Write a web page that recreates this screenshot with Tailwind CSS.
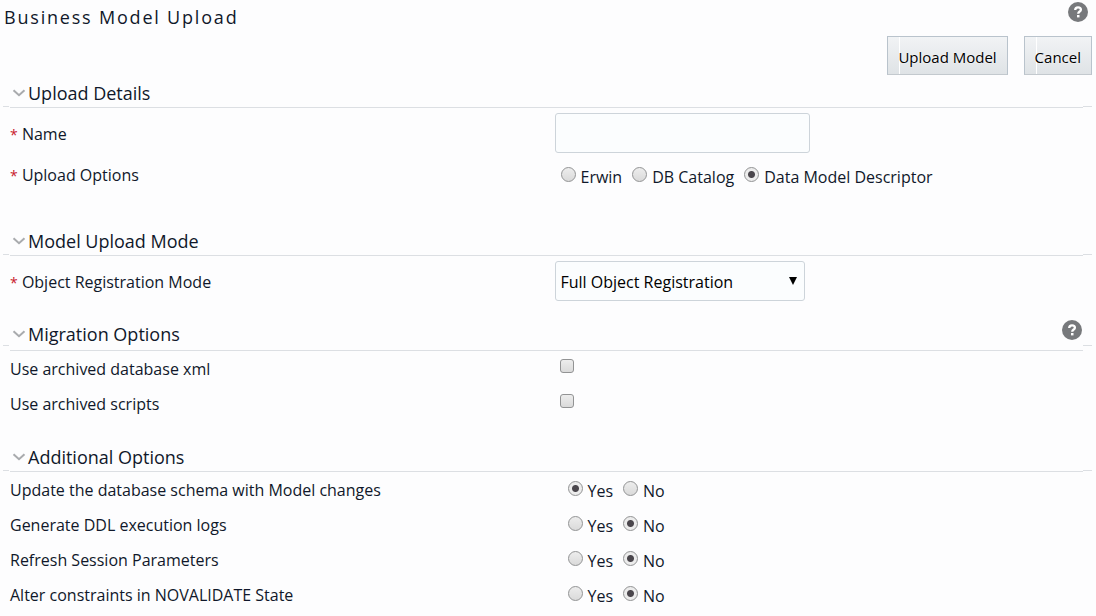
<!DOCTYPE html>
<html lang="en">
<head>
<meta charset="utf-8">
<title>Business Model Upload</title>
<meta name="viewport" content="width=device-width, initial-scale=1.0">
<script src="https://cdn.jsdelivr.net/npm/@tailwindcss/browser@4"></script>
</head>

<body class="min-h-screen bg-[#fdfdfe] font-['Open_Sans','Noto_Sans',sans-serif] text-[16px] leading-6 text-[#10182a]">
    <!-- Title and actions -->
    <header class="flex justify-between items-start pl-1 pr-1 h-[81px]">
        <h1 class="pt-[5px] text-[18px] leading-6 tracking-widest">Business Model Upload</h1>
        <div class="flex flex-col items-end">
            <button type="button" aria-label="Help" class="mt-[2px] mr-1">
                <svg width="20" height="20" viewBox="0 0 20 20" class="block">
                    <circle cx="10" cy="10" r="10" fill="#77797c"/>
                    <path d="M7.2 8C7.2 6.2 8.4 5.3 10 5.3S12.9 6.2 12.9 7.7C12.9 9.6 10.2 9.5 10.2 11.8" fill="none" stroke="#fff" stroke-width="2.3"/>
                    <rect x="9" y="13" width="2.5" height="2.4" fill="#fff"/>
                </svg>
            </button>
            <div class="flex gap-4 mt-[14px]">
                <button type="button" class="relative h-[39px] px-[10px] pt-[3px] border border-[#b9c3cc] border-b-[#c3c9ce] bg-linear-to-b from-[#f1f3f5] to-[#dfe3e6] text-black text-[15px] [text-shadow:0_0_2px_#fff]">
                    <span class="absolute left-[11px] inset-y-0 w-px bg-white"></span>
                    <span class="relative">Upload Model</span>
                </button>
                <button type="button" class="relative h-[39px] px-[10px] pt-[3px] border border-[#b9c3cc] border-b-[#c3c9ce] bg-linear-to-b from-[#f1f3f5] to-[#dfe3e6] text-black text-[15px] [text-shadow:0_0_2px_#fff]">
                    <span class="absolute left-[11px] inset-y-0 w-px bg-white"></span>
                    <span class="relative">Cancel</span>
                </button>
            </div>
        </div>
    </header>

    <main class="pl-[10px] pr-[13px]">
        <!-- Upload Details -->
        <section>
            <div class="relative flex items-center h-[27px] pb-[2px] border-b border-[#dcdfe3]">
                <span class="absolute -left-[7px] -bottom-px w-[6px] h-[2px] border-t border-[#dcdfe3]"></span>
                <span class="absolute -right-[9px] -bottom-px w-[9px] h-[2px] border-t border-[#dcdfe3]"></span>
                <svg width="14" height="8" viewBox="0 0 14 8" class="ml-[2px] mr-[2px]"><path d="M1.5 1.2L7 6.2L12.5 1.2" fill="none" stroke="#a9abae" stroke-width="2"/></svg>
                <h2 class="text-[18px] leading-6">Upload Details</h2>
            </div>
            <div class="grid grid-cols-2 items-center mt-[5px]">
                <label for="modelName" class="pt-[2px]"><span class="text-[14px] text-[#c8202c]">*</span> Name</label>
                <div class="pl-2">
                    <input type="text" id="modelName" class="block w-[255px] h-10 px-[5px] border border-[#cdd4da] rounded-[3px] bg-[#fbfdfe]">
                </div>
            </div>
            <fieldset class="grid grid-cols-2 items-center h-[35px] mt-[5px]" aria-labelledby="uploadOptions">
                <span id="uploadOptions"><span class="text-[14px] text-[#c8202c]">*</span> Upload Options</span>
                <div class="flex gap-[10px] pt-[2px] pl-[14px]">
                    <label class="flex gap-[5px]">
                        <input type="radio" name="source" class="appearance-none size-[15px] mt-[2px] rounded-full border border-[#929394] bg-linear-to-b from-[#ededed] to-[#dadada]">
                        Erwin
                    </label>
                    <label class="flex gap-[5px]">
                        <input type="radio" name="source" class="appearance-none size-[15px] mt-[2px] rounded-full border border-[#929394] bg-linear-to-b from-[#ededed] to-[#dadada]">
                        DB Catalog
                    </label>
                    <label class="flex gap-[5px]">
                        <input type="radio" name="source" checked class="appearance-none size-[15px] mt-[2px] rounded-full border border-[#929394] bg-[radial-gradient(circle,#4a464c_3px,#ececec_4px)]">
                        Data Model Descriptor
                    </label>
                </div>
            </fieldset>
        </section>

        <!-- Model Upload Mode -->
        <section class="mt-9">
            <div class="relative flex items-center h-[27px] pb-[2px] border-b border-[#dcdfe3]">
                <span class="absolute -left-[7px] -bottom-px w-[6px] h-[2px] border-t border-[#dcdfe3]"></span>
                <span class="absolute -right-[9px] -bottom-px w-[9px] h-[2px] border-t border-[#dcdfe3]"></span>
                <svg width="14" height="8" viewBox="0 0 14 8" class="ml-[2px] mr-[2px]"><path d="M1.5 1.2L7 6.2L12.5 1.2" fill="none" stroke="#a9abae" stroke-width="2"/></svg>
                <h2 class="text-[18px] leading-6">Model Upload Mode</h2>
            </div>
            <div class="grid grid-cols-2 items-center mt-[5px]">
                <label for="registrationMode" class="pt-[2px]"><span class="text-[14px] text-[#c8202c]">*</span> Object Registration Mode</label>
                <div class="pl-2">
                    <div class="relative w-[250px]">
                        <select id="registrationMode" class="block appearance-none w-full h-10 px-[5px] pt-[2px] border border-[#cdd4da] rounded-[3px] bg-[#fbfdfe] text-black">
                            <option>Full Object Registration</option>
                        </select>
                        <svg width="8" height="8" viewBox="0 0 8 8" class="absolute right-2 top-4 pointer-events-none"><path d="M0 0H8L4 8Z" fill="#000"/></svg>
                    </div>
                </div>
            </div>
        </section>

        <!-- Migration Options -->
        <section class="mt-[21px]">
            <div class="relative flex items-center h-[29px] pb-1 border-b border-[#dcdfe3]">
                <span class="absolute -left-[7px] bottom-[3px] w-[6px] h-[2px] border-t border-[#dcdfe3]"></span>
                <span class="absolute -right-[9px] bottom-[3px] w-[9px] h-[2px] border-t border-[#dcdfe3]"></span>
                <svg width="14" height="8" viewBox="0 0 14 8" class="ml-[2px] mr-[2px]"><path d="M1.5 1.2L7 6.2L12.5 1.2" fill="none" stroke="#a9abae" stroke-width="2"/></svg>
                <h2 class="text-[18px] leading-6">Migration Options</h2>
                <button type="button" aria-label="Help" class="ml-auto mr-px mb-2">
                    <svg width="20" height="20" viewBox="0 0 20 20" class="block">
                        <circle cx="10" cy="10" r="10" fill="#77797c"/>
                        <path d="M7.2 8C7.2 6.2 8.4 5.3 10 5.3S12.9 6.2 12.9 7.7C12.9 9.6 10.2 9.5 10.2 11.8" fill="none" stroke="#fff" stroke-width="2.3"/>
                        <rect x="9" y="13" width="2.5" height="2.4" fill="#fff"/>
                    </svg>
                </button>
            </div>
            <div class="grid grid-cols-2 items-center h-[35px]">
                <label for="archivedXml">Use archived database xml</label>
                <div class="pl-[13px] pb-[6px]">
                    <input type="checkbox" id="archivedXml" class="block appearance-none size-[14px] rounded-[3px] border border-[#929394] bg-linear-to-b from-[#ededed] to-[#dadada]">
                </div>
            </div>
            <div class="grid grid-cols-2 items-center h-[35px]">
                <label for="archivedScripts">Use archived scripts</label>
                <div class="pl-[13px] pb-[6px]">
                    <input type="checkbox" id="archivedScripts" class="block appearance-none size-[14px] rounded-[3px] border border-[#929394] bg-linear-to-b from-[#ededed] to-[#dadada]">
                </div>
            </div>
        </section>

        <!-- Additional Options -->
        <section class="mt-6">
            <div class="relative flex items-center h-[27px] pb-[2px] border-b border-[#dcdfe3]">
                <span class="absolute -left-[7px] -bottom-px w-[6px] h-[2px] border-t border-[#dcdfe3]"></span>
                <span class="absolute -right-[9px] -bottom-px w-[9px] h-[2px] border-t border-[#dcdfe3]"></span>
                <svg width="14" height="8" viewBox="0 0 14 8" class="ml-[2px] mr-[2px]"><path d="M1.5 1.2L7 6.2L12.5 1.2" fill="none" stroke="#a9abae" stroke-width="2"/></svg>
                <h2 class="text-[18px] leading-6">Additional Options</h2>
            </div>
            <fieldset class="grid grid-cols-2 items-center h-[35px]" aria-labelledby="updateSchema">
                <span id="updateSchema">Update the database schema with Model changes</span>
                <div class="flex gap-[10px] pt-[2px] pl-[21px]">
                    <label class="flex gap-[5px]"><input type="radio" name="schema" checked class="appearance-none size-[15px] mt-[2px] rounded-full border border-[#929394] bg-[radial-gradient(circle,#4a464c_3px,#ececec_4px)]">Yes</label>
                    <label class="flex gap-[5px]"><input type="radio" name="schema" class="appearance-none size-[15px] mt-[2px] rounded-full border border-[#929394] bg-linear-to-b from-[#ededed] to-[#dadada]">No</label>
                </div>
            </fieldset>
            <fieldset class="grid grid-cols-2 items-center h-[35px]" aria-labelledby="ddlLogs">
                <span id="ddlLogs">Generate DDL execution logs</span>
                <div class="flex gap-[10px] pt-[2px] pl-[21px]">
                    <label class="flex gap-[5px]"><input type="radio" name="logs" class="appearance-none size-[15px] mt-[2px] rounded-full border border-[#929394] bg-linear-to-b from-[#ededed] to-[#dadada]">Yes</label>
                    <label class="flex gap-[5px]"><input type="radio" name="logs" checked class="appearance-none size-[15px] mt-[2px] rounded-full border border-[#929394] bg-[radial-gradient(circle,#4a464c_3px,#ececec_4px)]">No</label>
                </div>
            </fieldset>
            <fieldset class="grid grid-cols-2 items-center h-[35px]" aria-labelledby="refreshSession">
                <span id="refreshSession">Refresh Session Parameters</span>
                <div class="flex gap-[10px] pt-[2px] pl-[21px]">
                    <label class="flex gap-[5px]"><input type="radio" name="session" class="appearance-none size-[15px] mt-[2px] rounded-full border border-[#929394] bg-linear-to-b from-[#ededed] to-[#dadada]">Yes</label>
                    <label class="flex gap-[5px]"><input type="radio" name="session" checked class="appearance-none size-[15px] mt-[2px] rounded-full border border-[#929394] bg-[radial-gradient(circle,#4a464c_3px,#ececec_4px)]">No</label>
                </div>
            </fieldset>
            <fieldset class="grid grid-cols-2 items-center h-[35px]" aria-labelledby="alterConstraints">
                <span id="alterConstraints">Alter constraints in NOVALIDATE State</span>
                <div class="flex gap-[10px] pt-[2px] pl-[21px]">
                    <label class="flex gap-[5px]"><input type="radio" name="constraints" class="appearance-none size-[15px] mt-[2px] rounded-full border border-[#929394] bg-linear-to-b from-[#ededed] to-[#dadada]">Yes</label>
                    <label class="flex gap-[5px]"><input type="radio" name="constraints" checked class="appearance-none size-[15px] mt-[2px] rounded-full border border-[#929394] bg-[radial-gradient(circle,#4a464c_3px,#ececec_4px)]">No</label>
                </div>
            </fieldset>
        </section>
    </main>
</body>
</html>
